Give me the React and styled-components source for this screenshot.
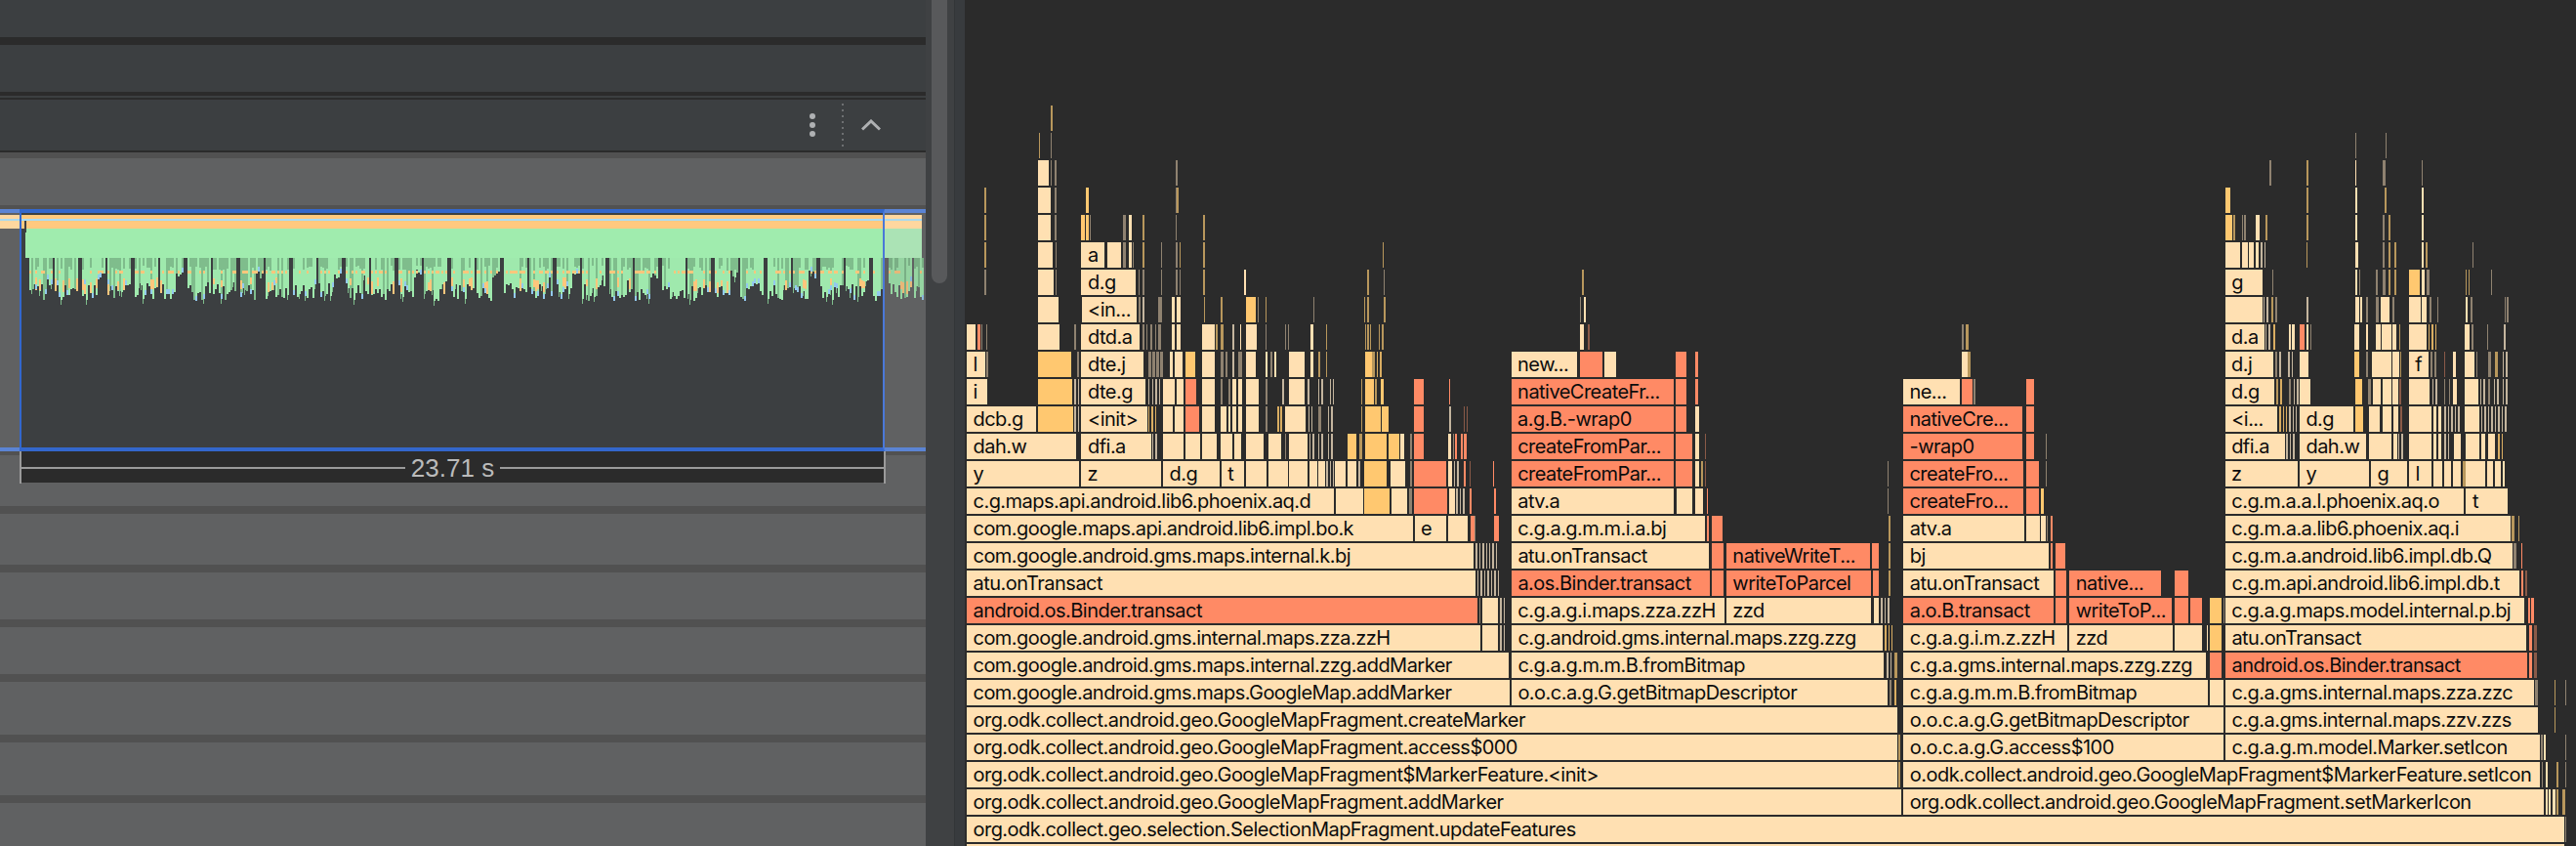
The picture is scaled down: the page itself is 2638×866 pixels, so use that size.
import React from 'react';
import styled, {createGlobalStyle} from 'styled-components';

const GlobalStyle = createGlobalStyle`
    html, body {
        margin: 0;
        padding: 0;
        background: #2b2b2b;
        overflow: hidden;
    }
`;

const COLORS = {
    p: '#ffe0b2',
    o: '#ffc870',
    r: '#ff8a65',
    m: '#8f8270',
    n: '#b8975c',
    d: '#8a5a48'
};

const STRIPES = {
    m: '#c4b59e',
    n: '#d9ad62'
};

// every frame is [start x, end x, kind, label], rows are keyed by their top edge
const FRAMES = {
    108: [[1076.4, 1078, 'n']],
    136: [[1064.3, 1065.3, 'n'], [1076, 1077.5, 'm'], [2412.3, 2413.3, 'm'], [2443, 2444, 'm']],
    164: [[1063, 1074.3, 'p'], [1075.7, 1077.5, 'm'], [1080.4, 1081.8, 'm'], [1204.3, 1205.7, 'm'], [2324.3, 2325.7, 'm'], [2362, 2363.7, 'n'], [2412, 2413.3, 'p'], [2440, 2443.3, 'm'], [2480, 2481, 'm']],
    192: [[1007.9, 1009.6, 'n'], [1063, 1075.7, 'p'], [1080.4, 1081.8, 'm'], [1112.5, 1114.6, 'o'], [1204, 1205, 'm'], [1205.5, 1207, 'n'], [2279, 2284, 'o'], [2362, 2363.7, 'n'], [2412, 2413.7, 'p'], [2442, 2443.7, 'n'], [2480, 2482.3, 'p']],
    220: [[1007.9, 1009.6, 'n'], [1063, 1076.4, 'p'], [1080.4, 1081.8, 'm'], [1107.5, 1111, 'o'], [1112, 1115, 'o'], [1116, 1117, 'm'], [1150.4, 1152.9, 'm'], [1155.7, 1158.6, 'p'], [1170.4, 1171.8, 'n'], [1204.3, 1205.4, 'm'], [1232.5, 1234, 'n'], [2279, 2285.7, 'o'], [2286.7, 2289, 'n'], [2295.7, 2297.3, 'm'], [2297.7, 2300, 'm'], [2310, 2313.7, 'p'], [2320, 2321.7, 'n'], [2362, 2363.7, 'n'], [2412, 2414.3, 'p'], [2440, 2442, 'm'], [2446, 2448, 'n'], [2480, 2482.3, 'p']],
    248: [[1007.9, 1009.6, 'n'], [1063, 1078, 'p'], [1081, 1082.5, 'm'], [1107.5, 1131.4, 'p', 'a'], [1133.6, 1147.9, 'p'], [1150.4, 1152.9, 'm'], [1155.7, 1158.6, 'p'], [1159.6, 1160.7, 'm'], [1170.4, 1171.8, 'n'], [1188.6, 1189.6, 'm'], [1204.3, 1205.7, 'm'], [1207.9, 1209.3, 'n'], [1232.5, 1234, 'n'], [1416.4, 1417.5, 'n'], [2279, 2294, 'p'], [2295.7, 2301.7, 'p'], [2303.3, 2308.3, 'p'], [2310, 2313.3, 'p'], [2315, 2321.7, 'm'], [2362, 2363.7, 'n'], [2412, 2415, 'p'], [2440, 2442, 'm'], [2446, 2448, 'n'], [2452.3, 2454, 'n'], [2480, 2482, 'p'], [2484, 2486, 'n'], [2532, 2533, 'm']],
    276: [[1007.9, 1009.6, 'm'], [1063, 1079.3, 'p'], [1081, 1082.5, 'm'], [1107.5, 1162.9, 'p', 'd.g'], [1165.7, 1166.8, 'm'], [1170.4, 1171.8, 'm'], [1188.6, 1189.6, 'm'], [1204.3, 1205.7, 'm'], [1207.9, 1209.3, 'm'], [1232.5, 1234, 'n'], [1274.3, 1275.7, 'p'], [1400.4, 1401.8, 'n'], [1417, 1418, 'm'], [1620, 1622, 'n'], [2279, 2317.3, 'p', 'g'], [2326.7, 2328, 'm'], [2412, 2414.7, 'p'], [2416, 2417.7, 'm'], [2433.3, 2435.3, 'm'], [2440, 2443.3, 'm'], [2446.7, 2448.3, 'n'], [2452.3, 2454, 'n'], [2467.3, 2478.3, 'o'], [2480, 2483.3, 'p'], [2485, 2488.3, 'm'], [2525, 2526.7, 'n'], [2528, 2529.3, 'n'], [2551, 2551.7, 'm']],
    304: [[1063, 1084, 'p'], [1107.5, 1164, 'p', '<in...'], [1165.7, 1168.3, 'm'], [1170.4, 1174.3, 'm'], [1186.4, 1189.6, 'm'], [1200.4, 1203.3, 'p'], [1205, 1208.6, 'p'], [1232.9, 1234, 'n'], [1250.4, 1251.8, 'n'], [1276.4, 1286.4, 'o'], [1287.9, 1289, 'm'], [1296, 1297, 'n'], [1345, 1345.7, 'm'], [1397.1, 1398.2, 'n'], [1400, 1402.5, 'n'], [1417.1, 1419.3, 'n'], [1618.3, 1619.3, 'm'], [1621.7, 1624, 'p'], [2279, 2317.3, 'p'], [2318.3, 2323.3, 'm'], [2326, 2328.3, 'n'], [2330, 2332, 'm'], [2362, 2366, 'm'], [2412, 2416.7, 'p'], [2417.3, 2419.3, 'p'], [2423.3, 2425.7, 'm'], [2433.3, 2436, 'm'], [2438.3, 2447.7, 'p'], [2450.7, 2452, 'm'], [2467.3, 2479.3, 'p'], [2480, 2485, 'p'], [2488.7, 2490, 'm'], [2496, 2497.7, 'm'], [2525, 2527.3, 'p'], [2530.7, 2532, 'm'], [2565, 2566, 'm'], [2567.7, 2569, 'm']],
    332: [[990, 998.6, 'p'], [1001, 1003.6, 'r'], [1005, 1006.4, 'm'], [1009.6, 1010.7, 'm'], [1063, 1084.6, 'p'], [1100.4, 1101.8, 'm'], [1107.5, 1166.8, 'p', 'dtd.a'], [1170.4, 1172.1, 'm'], [1174, 1175, 'm'], [1178.2, 1180, 'm'], [1182.9, 1184.3, 'm'], [1186.4, 1189.6, 'm'], [1200.4, 1203.3, 'p'], [1205, 1209.3, 'p'], [1231, 1244, 'p'], [1245.7, 1247.1, 'n'], [1250.4, 1253, 'n'], [1262, 1266.4, 'm'], [1270, 1271.4, 'p'], [1276.4, 1287, 'p'], [1296, 1297, 'm'], [1316, 1317.5, 'm'], [1319.3, 1320.7, 'm'], [1342, 1345.7, 'p'], [1358, 1359.6, 'n'], [1397.9, 1399.3, 'n'], [1400.7, 1402.1, 'n'], [1403.2, 1404.3, 'n'], [1412, 1413.4, 'n'], [1414.9, 1417.5, 'n'], [1618, 1622, 'p'], [1626, 1628, 'd'], [2279, 2319.7, 'p', 'd.a'], [2320.7, 2326, 'm'], [2328.3, 2332.7, 'n'], [2344.3, 2346, 'p'], [2347.7, 2350, 'p'], [2355.3, 2360, 'r'], [2362, 2364, 'p'], [2366, 2367.7, 'm'], [2412, 2416.7, 'p'], [2423.3, 2425.7, 'p'], [2433.3, 2438.3, 'p'], [2439.3, 2450, 'p'], [2451, 2455, 'p'], [2458, 2459, 'n'], [2467.3, 2486, 'p'], [2487.3, 2497.3, 'n'], [2525, 2529.3, 'p'], [2531.7, 2534, 'm'], [2547.3, 2548, 'm'], [2565, 2569, 'm'], [2009.3, 2011.7, 'm'], [2013.3, 2016, 'n']],
    360: [[990, 1008.6, 'p', 'l'], [1010, 1012.1, 'm'], [1063, 1097, 'o'], [1103.2, 1104.6, 'm'], [1107.5, 1171.4, 'p', 'dte.j'], [1176.4, 1179, 'm'], [1180.4, 1183, 'm'], [1184, 1187, 'm'], [1188, 1191.4, 'm'], [1198, 1201.4, 'p'], [1203.2, 1211, 'p'], [1214, 1224.3, 'o'], [1231, 1244, 'p'], [1250.4, 1253, 'm'], [1255, 1256.8, 'm'], [1262, 1265.7, 'm'], [1268.6, 1272, 'm'], [1276.4, 1286.4, 'p'], [1296, 1298.6, 'p'], [1301.4, 1303.2, 'm'], [1305.7, 1307.5, 'p'], [1320, 1336, 'p'], [1342, 1345.7, 'p'], [1350.4, 1352, 'n'], [1358, 1359.6, 'n'], [1397.9, 1405, 'o'], [1405.7, 1407.9, 'n'], [1410, 1417.5, 'n'], [1547.9, 1615.7, 'p', 'new...'], [1617.9, 1641.4, 'r'], [1643.6, 1655, 'p'], [1716.4, 1727, 'r'], [1736.4, 1739.6, 'r'], [2009.3, 2015, 'p'], [2015.7, 2018.7, 'n'], [2279, 2328.3, 'p', 'd.j'], [2330, 2332.3, 'm'], [2334, 2337.7, 'm'], [2343.3, 2350.7, 'm'], [2355.3, 2365, 'p'], [2412, 2416.7, 'o'], [2423.3, 2425.7, 'm'], [2430, 2439.3, 'p'], [2440, 2449.3, 'p'], [2451, 2457.3, 'p'], [2458.3, 2459, 'n'], [2467.3, 2487.3, 'p', 'f'], [2489.3, 2491.7, 'm'], [2493.3, 2495.7, 'm'], [2503.3, 2504, 'd'], [2512.7, 2515.7, 'p'], [2525, 2535, 'p'], [2536.7, 2537.7, 'm'], [2548.3, 2551.7, 'm'], [2556, 2558.3, 'n'], [2564, 2568.3, 'm']],
    388: [[990, 1010.7, 'p', 'i'], [1063, 1097.9, 'o'], [1100.4, 1105, 'm'], [1107.5, 1172.9, 'p', 'dte.g'], [1176.4, 1189, 'm'], [1190.7, 1203.2, 'p'], [1205, 1212, 'p'], [1214, 1224.7, 'r'], [1231, 1244, 'p'], [1250.4, 1252.1, 'm'], [1257.9, 1260.4, 'm'], [1262, 1265.7, 'p'], [1268.6, 1272, 'p'], [1276.4, 1289.3, 'p'], [1296, 1298, 'm'], [1312.9, 1316.8, 'm'], [1320, 1336, 'p'], [1339, 1343.6, 'm'], [1350.4, 1355.7, 'm'], [1362, 1366, 'm'], [1394.3, 1395.4, 'n'], [1397.9, 1406.8, 'o'], [1408.6, 1410.7, 'n'], [1414, 1417.5, 'o'], [1448.2, 1458.6, 'r'], [1484, 1485.7, 'r'], [1547.9, 1714, 'r', 'nativeCreateFr...'], [1716.4, 1727, 'r'], [1736.4, 1739.6, 'r'], [1949.3, 2007.3, 'p', 'ne...'], [2009.3, 2020.3, 'r'], [2021.7, 2023.7, 'm'], [2075.3, 2083, 'r'], [2279, 2329.3, 'p', 'd.g'], [2331.7, 2333.3, 'n'], [2335, 2339.3, 'n'], [2344.3, 2346, 'm'], [2349.3, 2354.3, 'm'], [2355.3, 2366.7, 'p'], [2412, 2419.3, 'o'], [2425, 2428.3, 'm'], [2430, 2438.3, 'p'], [2440, 2449.3, 'p'], [2451, 2456.7, 'p'], [2458, 2460, 'd'], [2467.3, 2488.7, 'p'], [2491.7, 2498.3, 'm'], [2503.3, 2504.3, 'm'], [2508.3, 2509.3, 'm'], [2512.7, 2516.7, 'p'], [2525, 2538.3, 'p'], [2541, 2546.7, 'm'], [2548.7, 2550.7, 'm'], [2554.7, 2559.7, 'm'], [2563.3, 2568.3, 'm']],
    416: [[990, 1061.4, 'p', 'dcb.g'], [1063, 1098.6, 'o'], [1100.4, 1105, 'm'], [1107.5, 1174.6, 'p', '<init>'], [1176.4, 1186.4, 'n'], [1190.7, 1201.4, 'p'], [1203.2, 1212, 'p'], [1214, 1228, 'r'], [1231, 1244, 'p'], [1250.4, 1255.7, 'p'], [1257.9, 1260.4, 'p'], [1262, 1265.7, 'p'], [1268.6, 1272, 'p'], [1276.4, 1289.3, 'p'], [1296, 1298, 'm'], [1308.6, 1313, 'n'], [1315.7, 1337, 'p'], [1340, 1344.3, 'm'], [1350.4, 1353, 'm'], [1360.4, 1366, 'm'], [1394.3, 1395.4, 'n'], [1397.9, 1413.9, 'o'], [1415, 1422, 'o'], [1448.2, 1458.6, 'r'], [1484, 1488, 'm'], [1499.3, 1500, 'd'], [1502, 1502.7, 'd'], [1547.9, 1714, 'r', 'a.g.B.-wrap0'], [1716.4, 1727, 'r'], [1736.4, 1740.7, 'p'], [1949.3, 2071, 'r', 'nativeCre...'], [2075.3, 2083, 'r'], [2279, 2332, 'p', '<i...'], [2334, 2342, 'n'], [2344.3, 2352.7, 'm'], [2355.3, 2410, 'p', 'd.g'], [2412, 2420.7, 'o'], [2426, 2437.7, 'p'], [2440, 2449.3, 'p'], [2451, 2456.7, 'p'], [2458, 2460, 'd'], [2467.3, 2490, 'p'], [2492, 2495, 'p'], [2497.3, 2500, 'p'], [2503.3, 2519.3, 'm'], [2525, 2539.3, 'p'], [2541.7, 2568.3, 'm']],
    444: [[990, 1101.8, 'p', 'dah.w'], [1107.5, 1179, 'p', 'dfi.a'], [1180, 1186, 'm'], [1190.7, 1212, 'p'], [1214, 1229, 'p'], [1231, 1246, 'p'], [1250.4, 1262, 'p'], [1264, 1271, 'p'], [1276.4, 1293.6, 'p'], [1298.6, 1312, 'p'], [1315.7, 1317.5, 'm'], [1320, 1339, 'p'], [1341.4, 1347.9, 'm'], [1350.4, 1357, 'm'], [1360.4, 1366, 'm'], [1380, 1389, 'o'], [1392.5, 1395, 'n'], [1397.9, 1420, 'o'], [1422, 1433.6, 'o'], [1434.3, 1437.9, 'p'], [1444.3, 1446, 'm'], [1448.2, 1458.6, 'r'], [1483, 1486, 'p'], [1488, 1489, 'm'], [1490, 1492, 'r'], [1496.7, 1498.3, 'r'], [1499.3, 1502.7, 'r'], [1547.9, 1714, 'r', 'createFromPar...'], [1716.4, 1733.2, 'r'], [1736.4, 1740.7, 'p'], [1746, 1747, 'd'], [1949.3, 2071.7, 'r', '-wrap0'], [2075.3, 2083, 'r'], [2095, 2095.7, 'm'], [2279, 2340, 'p', 'dfi.a'], [2341.7, 2350.7, 'm'], [2355.3, 2423, 'p', 'dah.w'], [2426, 2449.3, 'p'], [2451, 2455.3, 'p'], [2456.7, 2463.3, 'm'], [2467.3, 2490, 'p'], [2492, 2495, 'p'], [2497.3, 2500, 'p'], [2503.3, 2508.3, 'm'], [2513.3, 2520.7, 'p'], [2525, 2539.3, 'p'], [2541, 2545, 'p'], [2548.3, 2555, 'p'], [2558.3, 2563.3, 'n']],
    472: [[990, 1105.4, 'p', 'y'], [1107, 1189.3, 'p', 'z'], [1191, 1248.6, 'p', 'd.g'], [1250.7, 1273.6, 'p', 't'], [1276.4, 1297, 'p'], [1298.6, 1318.6, 'p'], [1320, 1339, 'p'], [1340.7, 1348.6, 'p'], [1350.4, 1357, 'p'], [1358, 1365.7, 'm'], [1367.5, 1378, 'p'], [1380, 1389, 'p'], [1390.7, 1395, 'm'], [1397, 1420.4, 'o'], [1424.6, 1439, 'p'], [1444.3, 1446, 'm'], [1448, 1481, 'r'], [1483.3, 1486.7, 'p'], [1489.3, 1496.7, 'm'], [1499.3, 1501.7, 'r'], [1505.3, 1506.7, 'd'], [1529.3, 1530, 'r'], [1547.9, 1714.6, 'r', 'createFromPar...'], [1716.4, 1733.6, 'r'], [1736.4, 1740.7, 'p'], [1742.5, 1744.3, 'n'], [1746, 1747, 'd'], [1933.6, 1934.3, 'm'], [1949.3, 2072, 'r', 'createFro...'], [2075.3, 2088, 'r'], [2095, 2095.7, 'm'], [2279, 2353.3, 'p', 'z'], [2355.3, 2426, 'p', 'y'], [2428.3, 2465.3, 'p', 'g'], [2467.3, 2490, 'p', 'l'], [2492, 2501, 'p'], [2503.3, 2510.7, 'p'], [2512.7, 2520.7, 'p'], [2522.3, 2525, 'n'], [2525.7, 2545.3, 'p'], [2547.3, 2553.3, 'p'], [2555, 2561.7, 'p'], [2563.3, 2565.7, 'p']],
    500: [[990, 1366.4, 'p', 'c.g.maps.api.android.lib6.phoenix.aq.d'], [1367.9, 1396, 'p'], [1397, 1422.9, 'o'], [1424.6, 1440.7, 'p'], [1443, 1446, 'm'], [1447.9, 1481.8, 'r'], [1483.6, 1490, 'p'], [1490.7, 1502, 'm'], [1505, 1506.8, 'r'], [1530, 1531.7, 'r'], [1547.9, 1714.6, 'p', 'atv.a'], [1717, 1733.6, 'p'], [1736.4, 1744.3, 'p'], [1748, 1749.6, 'r'], [1933.6, 1934.3, 'm'], [1949.3, 2072.7, 'r', 'createFro...'], [2075.3, 2088.7, 'r'], [2090, 2093.3, 'o'], [2279, 2523.3, 'p', 'c.g.m.a.a.l.phoenix.aq.o'], [2525.7, 2568.3, 'p', 't']],
    528: [[990, 1446.8, 'p', 'com.google.maps.api.android.lib6.impl.bo.k'], [1448.6, 1481, 'p', 'e'], [1482.9, 1503.2, 'p'], [1505.7, 1509.6, 'r'], [1510.5, 1511.5, 'm'], [1530, 1535, 'r'], [1547.9, 1746, 'p', 'c.g.a.g.m.m.i.a.bj'], [1748, 1749.6, 'r'], [1753.2, 1764, 'r'], [1934.3, 1935.7, 'n'], [1949.3, 2073.3, 'p', 'atv.a'], [2075.3, 2088.7, 'p'], [2090, 2095.3, 'p'], [2096.3, 2097.3, 'm'], [2100, 2101.7, 'r'], [2279, 2570.7, 'p', 'c.g.m.a.a.lib6.phoenix.aq.i'], [2572, 2575, 'n'], [2578.7, 2580, 'n']],
    556: [[990, 1508.6, 'p', 'com.google.android.gms.maps.internal.k.bj'], [1510.7, 1535.4, 'm'], [1547.9, 1750.4, 'p', 'atu.onTransact'], [1753.2, 1765, 'r'], [1767.9, 1915, 'r', 'nativeWriteT...'], [1917.5, 1923.6, 'r'], [1934.3, 1935.7, 'n'], [1949.3, 2098.3, 'p', 'bj'], [2100, 2101.7, 'r'], [2105.3, 2115.3, 'r'], [2279, 2572.7, 'p', 'c.g.m.a.android.lib6.impl.db.Q'], [2574.3, 2577.3, 'm'], [2582, 2583, 'r']],
    584: [[990, 1511.4, 'p', 'atu.onTransact'], [1513, 1537, 'm'], [1547.9, 1751.4, 'r', 'a.os.Binder.transact'], [1753.2, 1765, 'r'], [1767.9, 1915.7, 'r', 'writeToParcel'], [1918.2, 1924.3, 'r'], [1934.3, 1935.7, 'n'], [1949.3, 2102.7, 'p', 'atu.onTransact'], [2105.3, 2116, 'r'], [2119.3, 2212.7, 'r', 'native...'], [2226.7, 2241.3, 'r'], [2279, 2580, 'p', 'c.g.m.api.android.lib6.impl.db.t'], [2582, 2584.3, 'r'], [2586, 2587.7, 'd']],
    612: [[990, 1512.9, 'r', 'android.os.Binder.transact'], [1515, 1516.4, 'm'], [1517.9, 1533.6, 'p'], [1536, 1541, 'm'], [1547.9, 1765.7, 'p', 'c.g.a.g.i.maps.zza.zzH'], [1767.9, 1916.4, 'p', 'zzd'], [1918.6, 1923.6, 'p'], [1925.7, 1935.4, 'm'], [1949.3, 2103.3, 'r', 'a.o.B.transact'], [2105.3, 2116, 'r'], [2119.3, 2224, 'r', 'writeToP...'], [2226.7, 2241.3, 'r'], [2243.3, 2254.7, 'r'], [2262.7, 2275, 'o'], [2276.7, 2277.7, 'm'], [2279, 2585, 'p', 'c.g.a.g.maps.model.internal.p.bj'], [2589.3, 2590.7, 'r'], [2592, 2595, 'r']],
    640: [[990, 1516.4, 'p', 'com.google.android.gms.internal.maps.zza.zzH'], [1517.9, 1534, 'p'], [1536, 1541, 'm'], [1547.9, 1928.2, 'p', 'c.g.android.gms.internal.maps.zzg.zzg'], [1930, 1938.4, 'n'], [1949.3, 2117.3, 'p', 'c.g.a.g.i.m.z.zzH'], [2119.3, 2225, 'p', 'zzd'], [2226.7, 2255, 'p'], [2260, 2261.3, 'p'], [2262.7, 2275, 'o'], [2279, 2587.3, 'p', 'atu.onTransact'], [2590, 2593.3, 'r'], [2595.3, 2598.3, 'd']],
    668: [[990, 1544.6, 'p', 'com.google.android.gms.maps.internal.zzg.addMarker'], [1547.9, 1929.3, 'p', 'c.g.a.g.m.m.B.fromBitmap'], [1931.8, 1937, 'm'], [1940, 1943, 'n'], [1949.3, 2259, 'p', 'c.g.a.gms.internal.maps.zzg.zzg'], [2262.7, 2275, 'r'], [2279, 2588.3, 'r', 'android.os.Binder.transact'], [2590, 2593.3, 'r'], [2595, 2598.3, 'd']],
    696: [[990, 1546, 'p', 'com.google.android.gms.maps.GoogleMap.addMarker'], [1547.9, 1932.9, 'p', 'o.o.c.a.g.G.getBitmapDescriptor'], [1935.4, 1937, 'm'], [1940, 1943.6, 'n'], [1949.3, 2261, 'p', 'c.g.a.g.m.m.B.fromBitmap'], [2262.7, 2276.7, 'p'], [2279, 2595, 'p', 'c.g.a.gms.internal.maps.zza.zzc'], [2596, 2599.3, 'm'], [2616, 2616.7, 'n'], [2627.3, 2627.8, 'm']],
    724: [[990, 1942.5, 'p', 'org.odk.collect.android.geo.GoogleMapFragment.createMarker'], [1949.3, 2276.7, 'p', 'o.o.c.a.g.G.getBitmapDescriptor'], [2279, 2599.3, 'p', 'c.g.a.gms.internal.maps.zzv.zzs'], [2616, 2616.7, 'n']],
    752: [[990, 1942.5, 'p', 'org.odk.collect.android.geo.GoogleMapFragment.access$000'], [1944, 1946, 'n'], [1949.3, 2276.7, 'p', 'o.o.c.a.g.G.access$100'], [2279, 2600.7, 'p', 'c.g.a.g.m.model.Marker.setIcon'], [2602, 2604, 'm'], [2605.3, 2607.3, 'p'], [2627.3, 2627.8, 'm']],
    780: [[990, 1942.5, 'p', 'org.odk.collect.android.geo.GoogleMapFragment$MarkerFeature.<init>'], [1944, 1946, 'n'], [1949.3, 2600.7, 'p', 'o.odk.collect.android.geo.GoogleMapFragment$MarkerFeature.setIcon'], [2602.7, 2604, 'm'], [2606.7, 2608.7, 'p'], [2618.3, 2619.7, 'n'], [2627.3, 2627.8, 'm']],
    808: [[990, 1947, 'p', 'org.odk.collect.android.geo.GoogleMapFragment.addMarker'], [1949.3, 2605, 'p', 'org.odk.collect.android.geo.GoogleMapFragment.setMarkerIcon'], [2606.7, 2608.7, 'p'], [2610, 2612, 'p'], [2614, 2616.7, 'p'], [2618.3, 2620, 'n'], [2624, 2627.3, 'n']],
    836: [[990, 2626, 'p', 'org.odk.collect.geo.selection.SelectionMapFragment.updateFeatures'], [2626.7, 2627.7, 'm']],
    864: [[990, 2626, 'p']]
};

const SPIKE_COLORS = {
    green: '#9fe9ad',
    shade: '#7fbd8c',
    orange: '#ffc67c',
    blue: '#93c9ee'
};

// the cpu usage fringe is noise with a dip every 27px, a seeded generator keeps it stable between runs
function buildSpikes(width, seed) {
    const paths = {green: '', shade: '', orange: '', blue: ''};
    const rect = (key, x, y, w, h) => {
        paths[key] += `M${x} ${y}h${w}v${h}h${-w}z`;
    };
    let state = seed;
    const rnd = () => {
        state = (state * 16807) % 2147483647;
        return state / 2147483647;
    };
    for (let x = 0; x < width; x += 2) {
        const phase = x % 27;
        if (phase < 3) continue;
        const shallow = x % 81 > 72;
        const tail = phase > 21 ? 10 : 0;
        const depth = shallow ? Math.round(12 + rnd() * 10) : Math.round(26 + rnd() * 18 - tail * rnd());
        rect(rnd() < 0.22 ? 'shade' : 'green', x, 0, 2, depth);
        if (rnd() < 0.45) rect('shade', x, 0, 2, 8 + rnd() * 5);
        if (rnd() < 0.4) rect('orange', x, 13, 2, 3);
        if (!shallow && rnd() < 0.2) rect('orange', x, 20 + Math.floor(rnd() * 6), 2, 6 + rnd() * 8);
        if (rnd() < 0.22) rect('blue', x, depth - 5, 2, 5);
        if (rnd() < 0.16) rect('shade', x, depth, 1, 5);
    }
    return paths;
}

const Page = styled.div`
    display: flex;
    width: 2638px;
    height: 866px;
    overflow: hidden;
    background: #2b2b2b;
`;

const LeftPane = styled.div`
    display: flex;
    flex-direction: column;
    width: 948px;
    flex: none;
    background: #606162;
`;

const Band = styled.div`
    flex: none;
    height: ${p => p.$h}px;
    background: ${p => p.$bg};
`;

const Toolbar = styled.div`
    flex: none;
    height: 52px;
    display: flex;
    align-items: center;
    justify-content: flex-end;
    padding-right: 46px;
    background: #3c3f41;
`;

const ToolbarDivider = styled.div`
    width: 2px;
    height: 44px;
    margin: 0 18px 0 27px;
    background: repeating-linear-gradient(#6e7072 0 2px, transparent 2px 6px);
`;

const Timeline = styled.div`
    flex: none;
    height: 248px;
    display: grid;
    grid-template-columns: 20px 886px 1fr;
`;

const TimelineColumn = styled.div`
    position: relative;
    display: flex;
    flex-direction: column;
    box-sizing: border-box;
    padding-top: 2px;
    overflow: hidden;
    background: ${p => (p.$selected ? '#3c3f41' : '#606162')};
    border-top: 4px solid ${p => (p.$selected ? '#3367cc' : '#5b84d4')};
    border-bottom: 4px solid ${p => (p.$selected ? '#3367cc' : '#5b84d4')};
    ${p => p.$selected && `
        border-left: 2px solid #3367cc;
        border-right: 2px solid #4a78d8;
    `}
`;

const StartTick = styled.div`
    position: absolute;
    top: 8px;
    left: 3px;
    width: 2px;
    height: 12px;
    background: #3c3f41;
`;

const Strip = styled.div`
    flex: none;
    height: ${p => p.$h}px;
    margin-left: ${p => p.$inset || 0}px;
    margin-right: ${p => p.$trim || 0}px;
    background: ${p => p.$color};
`;

const SpikeChart = styled.svg`
    display: block;
    flex: none;
    margin-left: ${p => p.$inset || 0}px;
    opacity: ${p => (p.$dim ? 0.85 : 1)};
`;

const RangeRow = styled.div`
    flex: none;
    box-sizing: border-box;
    height: 56px;
    padding-left: 20px;
    border-top: 4px solid #515151;
    background: #606162;
`;

const RangeBar = styled.div`
    display: flex;
    align-items: center;
    box-sizing: border-box;
    width: 887px;
    height: 33px;
    margin-top: -4px;
    background: linear-gradient(#2b2b2b 32px, transparent 32px);
    border-left: 2px solid #9a9a9a;
    border-right: 2px solid #9a9a9a;
`;

const RangeLine = styled.div`
    flex: 1;
    height: 2px;
    background: #9a9a9a;
`;

const RangeLabel = styled.span`
    padding: 0 6px;
    font: 26px/32px "Liberation Sans", Arial, sans-serif;
    color: #bbbbbb;
`;

const TrackRow = styled.div`
    flex: none;
    box-sizing: border-box;
    height: ${p => p.$h}px;
    border-bottom: 8px solid #515151;
    background: #606162;
`;

const Gutter = styled.div`
    display: flex;
    flex: none;
    width: 40px;
    background: #3f4143;
`;

const ScrollThumb = styled.div`
    flex: none;
    width: 16px;
    height: 290px;
    margin-left: 6px;
    background: #58595b;
    border-radius: 0 0 8px 8px;
`;

const GutterTail = styled.div`
    flex: 1;
    margin-left: 7px;
    border-left: 1px solid #333638;
    background: #383b3e;
`;

const Flame = styled.div`
    flex: none;
    display: flex;
    flex-direction: column;
    gap: 2px;
    box-sizing: border-box;
    width: 1650px;
    height: 866px;
    padding-top: 108px;
    overflow: hidden;
    background: #2b2b2b;
`;

const FlameRow = styled.div`
    display: flex;
    flex: none;
    height: 26px;
`;

const Frame = styled.div`
    flex: none;
    box-sizing: border-box;
    height: 26px;
    overflow: hidden;
    white-space: nowrap;
    padding-left: ${p => (p.$label ? 6.5 : 0)}px;
    font: 20px/26px Inter, "Liberation Sans", sans-serif;
    letter-spacing: -0.53px;
    color: #0c0c0c;
    background: ${p => COLORS[p.$kind]};
    ${p => p.$striped && `
        background: repeating-linear-gradient(90deg, ${STRIPES[p.$kind]} 0 1.5px, #2b2b2b 1.5px 3.5px);
    `}
`;

const LEFT_EDGE = 988;

function FlameChart() {
    const tops = Object.keys(FRAMES).map(Number).sort((a, b) => a - b);
    return (
        <Flame>
            {tops.map(top => {
                let cursor = LEFT_EDGE;
                const frames = [...FRAMES[top]].sort((a, b) => a[0] - b[0]);
                return (
                    <FlameRow key={top}>
                        {frames.map(([start, end, kind, label]) => {
                            const style = {marginLeft: Math.max(start - cursor, 0), width: end - start};
                            const striped = end - start > 3.5 && STRIPES[kind] !== undefined;
                            cursor = end;
                            return (
                                <Frame key={start} $kind={kind} $label={label} $striped={striped} style={style}>
                                    {label}
                                </Frame>
                            );
                        })}
                    </FlameRow>
                );
            })}
        </Flame>
    );
}

function Spikes({width, seed, inset, dim}) {
    const paths = buildSpikes(width, seed);
    return (
        <SpikeChart $inset={inset} $dim={dim} width={width} height={50} viewBox={`0 0 ${width} 50`} shapeRendering="crispEdges">
            {Object.keys(paths).map(key => <path key={key} d={paths[key]} fill={SPIKE_COLORS[key]} />)}
        </SpikeChart>
    );
}

export default function App() {
    return (
        <Page>
            <GlobalStyle />
            <LeftPane>
                <Band $h={38} $bg="#3c3f41" />
                <Band $h={8} $bg="#2b2b2b" />
                <Band $h={48} $bg="#3c3f41" />
                <Band $h={4} $bg="#2b2b2b" />
                <Band $h={2} $bg="#3c3f41" />
                <Band $h={2} $bg="#2b2b2b" />
                <Toolbar>
                    <svg width="6" height="24" viewBox="0 0 6 24">
                        <circle cx="3" cy="3" r="3" fill="#afb1b3" />
                        <circle cx="3" cy="12" r="3" fill="#afb1b3" />
                        <circle cx="3" cy="21" r="3" fill="#afb1b3" />
                    </svg>
                    <ToolbarDivider />
                    <svg width="20" height="12" viewBox="0 0 20 12">
                        <polyline points="1,10.5 10,2 19,10.5" fill="none" stroke="#afb1b3" strokeWidth="3" />
                    </svg>
                </Toolbar>
                <Band $h={2} $bg="#2b2b2b" />
                <Band $h={6} $bg="#515151" />
                <Band $h={48} $bg="#606162" />
                <Band $h={4} $bg="#515151" />
                <Timeline>
                    <TimelineColumn>
                        <Strip $h={4} $color="#ffd79f" />
                        <Strip $h={2} $color="#a9d9ee" />
                        <Strip $h={8} $color="#ffd79f" />
                    </TimelineColumn>
                    <TimelineColumn $selected>
                        <Strip $h={4} $color="#ffc97f" />
                        <Strip $h={2} $color="#a8dcf5" />
                        <Strip $h={8} $color="#ffc97f" />
                        <StartTick />
                        <Strip $h={30} $inset={4} $color="#a0ecae" />
                        <Spikes width={878} seed={48271} inset={4} />
                    </TimelineColumn>
                    <TimelineColumn>
                        <Strip $h={4} $trim={4} $color="#ffd79f" />
                        <Strip $h={2} $trim={4} $color="#a9d9ee" />
                        <Strip $h={8} $trim={4} $color="#ffd79f" />
                        <Strip $h={30} $trim={4} $color="#abe3b5" />
                        <Spikes width={40} seed={1093} dim />
                    </TimelineColumn>
                </Timeline>
                <RangeRow>
                    <RangeBar>
                        <RangeLine />
                        <RangeLabel>23.71 s</RangeLabel>
                        <RangeLine />
                    </RangeBar>
                </RangeRow>
                <TrackRow $h={8} />
                <TrackRow $h={60} />
                <TrackRow $h={56} />
                <TrackRow $h={56} />
                <TrackRow $h={62} />
                <TrackRow $h={62} />
                <Band $h={44} $bg="#606162" />
            </LeftPane>
            <Gutter>
                <ScrollThumb />
                <GutterTail />
            </Gutter>
            <FlameChart />
        </Page>
    );
}
